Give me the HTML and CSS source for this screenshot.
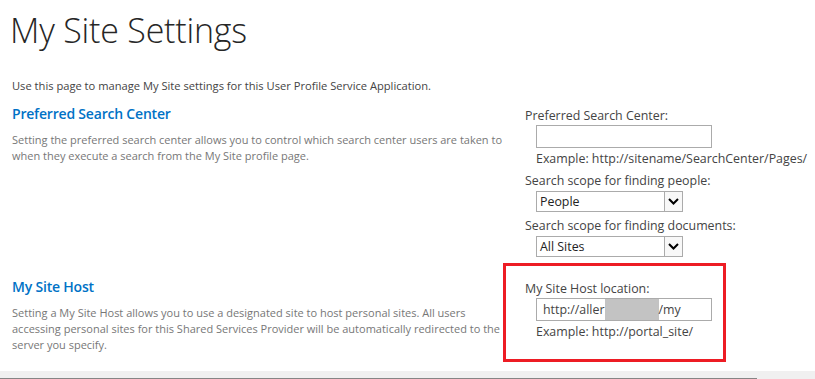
FILE: index.html
```html
<!DOCTYPE html>
<html>
<head>
<meta charset="utf-8">
<link rel="stylesheet" href="styles.css">
</head>
<body>
<div class="page">
  <h1 class="title">My Site Settings</h1>
  <p class="intro">Use this page to manage My Site settings for this User Profile Service Application.</p>

  <div class="section sec-search">
    <div class="left">
      <h2 class="head">Preferred Search Center</h2>
      <p class="desc">Setting the preferred search center allows you to control which search center users are taken to when they execute a search from the My Site profile page.</p>
    </div>
    <div class="right">
      <div class="label">Preferred Search Center:</div>
      <div class="field"><div class="textbox"></div></div>
      <div class="example">Example: http://sitename/SearchCenter/Pages/</div>
      <div class="label l2">Search scope for finding people:</div>
      <div class="field"><div class="dropdown"><span class="dd-text">People</span><span class="dd-btn"><svg width="11" height="7" viewBox="0 0 11 7"><path d="M1 1 L5.5 5.5 L10 1" fill="none" stroke="#000" stroke-width="2"/></svg></span></div></div>
      <div class="label l3">Search scope for finding documents:</div>
      <div class="field"><div class="dropdown"><span class="dd-text">All Sites</span><span class="dd-btn"><svg width="11" height="7" viewBox="0 0 11 7"><path d="M1 1 L5.5 5.5 L10 1" fill="none" stroke="#000" stroke-width="2"/></svg></span></div></div>
    </div>
  </div>

  <div class="section sec-host">
    <div class="left">
      <h2 class="head">My Site Host</h2>
      <p class="desc">Setting a My Site Host allows you to use a designated site to host personal sites. All users accessing personal sites for this Shared Services Provider will be automatically redirected to the server you specify.</p>
      <p class="desc more">If you are using multiple User Profile Service Applications, make sure all of them point to the same host.</p>
    </div>
    <div class="right">
      <div class="label">My Site Host location:</div>
      <div class="field"><div class="textbox filled"><span>http://aller</span><span class="redact"></span><span>/my</span></div></div>
      <div class="example">Example: http://portal_site/</div>
      <div class="highlight"></div>
    </div>
  </div>
</div>
<div class="hscroll"><div class="thumb"></div></div>
</body>
</html>
```

FILE: styles.css
```css
html, body {
  margin: 0;
  padding: 0;
  background: #fff;
  overflow: hidden;
}
body {
  font-family: "Open Sans", "Noto Sans", "Liberation Sans", sans-serif;
  color: #444;
}
.page {
  padding: 0 0 0 12px;
}
.title {
  font-family: "Open Sans", "Noto Sans", sans-serif;
  font-weight: 300;
  font-size: 34px;
  line-height: 40px;
  color: #262626;
  margin: 10px 0 0 -2px;
  letter-spacing: -0.2px;
}
.intro {
  font-size: 11.15px;
  color: #444;
  margin: 28px 0 0 0;
  line-height: 16px;
}
.section {
  display: grid;
  grid-template-columns: 513px 1fr;
}
.sec-search {
  margin-top: 10px;
}
.sec-host {
  margin-top: 20px;
}
.head {
  font-size: 14px;
  font-weight: 600;
  color: #0072c6;
  margin: 0;
  line-height: 20px;
  letter-spacing: -0.2px;
}
.desc {
  font-size: 11px;
  line-height: 16px;
  color: #777;
  margin: 8px 0 0 0;
  max-width: 498px;
}
.desc.more {
  margin-top: 18px;
}
.right {
  position: relative;
  font-size: 12.4px;
  color: #444;
}
.label {
  line-height: 18px;
  margin-top: 3px;
}
.label.l2 {
  margin-top: 4px;
}
.label.l3 {
  margin-top: 5px;
}
.field {
  padding-left: 11px;
  margin-top: 0;
}
.textbox {
  width: 174px;
  height: 21px;
  border: 1px solid #ababab;
  background: #fff;
  display: flex;
  align-items: stretch;
  line-height: 21px;
  box-sizing: content-box;
}
.textbox.filled span:first-child {
  padding-left: 6px;
}
.redact {
  width: 54px;
  background: #c3c3c3;
}
.example {
  padding-left: 11px;
  margin-top: 2px;
  line-height: 18px;
}
.dropdown {
  width: 145px;
  height: 19px;
  border: 1px solid #ababab;
  display: flex;
  justify-content: space-between;
  align-items: stretch;
  line-height: 19px;
  margin-top: 1px;
}
.dd-text {
  padding-left: 3px;
  color: #222;
}
.dd-btn {
  width: 17px;
  border-left: 1px solid #ababab;
  background: #f8f8f8;
  display: flex;
  align-items: center;
  justify-content: center;
}
.highlight {
  position: absolute;
  left: -22px;
  top: -14px;
  width: 217px;
  height: 93px;
  border: 3px solid #ed1c24;
}
.hscroll {
  position: fixed;
  left: 0;
  right: 0;
  bottom: 0;
  height: 8px;
  background: #f0f0f0;
}
.thumb {
  position: absolute;
  left: 0;
  top: 7px;
  width: 757px;
  height: 1px;
  background: #858585;
}
```
